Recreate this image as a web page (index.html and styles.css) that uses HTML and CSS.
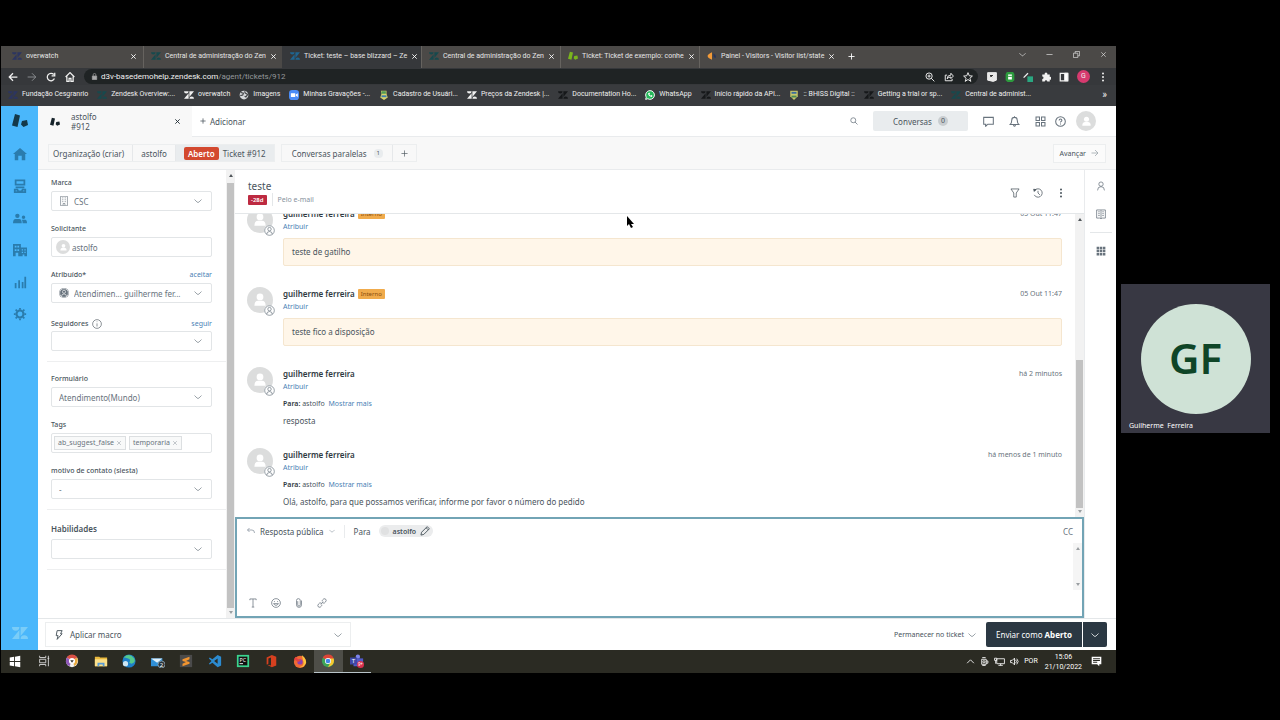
FILE: index.html
```html
<!DOCTYPE html>
<html lang="pt-BR">
<head>
    <meta charset="UTF-8">
    <meta name="viewport" content="width=device-width, initial-scale=1.0">
    <title>Ticket: teste – base blizzard – Zendesk</title>
    <link rel="stylesheet" href="styles.css">
</head>
<body>

<svg class="sprite" aria-hidden="true">
    <symbol id="i-close" viewBox="0 0 16 16"><path d="M3 3l10 10M13 3L3 13"/></symbol>
    <symbol id="i-plus" viewBox="0 0 16 16"><path d="M8 1v14M1 8h14"/></symbol>
    <symbol id="i-chevron" viewBox="0 0 16 16"><path d="M1 5l5 5q2 2 4 0l5-5"/></symbol>
    <symbol id="i-up" viewBox="0 0 16 16"><path d="M2 11l6-6 6 6"/></symbol>
    <symbol id="i-back" viewBox="0 0 16 16"><path d="M15 8H2M8 2L2 8l6 6"/></symbol>
    <symbol id="i-forward" viewBox="0 0 16 16"><path d="M1 8h13M8 2l6 6-6 6"/></symbol>
    <symbol id="i-reload" viewBox="0 0 16 16"><path d="M13.5 10.5A6 6 0 1 1 12.500 4M14 1v5H9"/></symbol>
    <symbol id="i-house" viewBox="0 0 16 16"><path d="M1 8l7-7 7 7M3 7v8h3.500v-5h3v5H13V7"/></symbol>
    <symbol id="i-lock" viewBox="0 0 16 16"><path d="M3 7h10v8H3z" fill="currentColor"/><path d="M5 7V4a3 3 0 0 1 6 0v3"/></symbol>
    <symbol id="i-search" viewBox="0 0 16 16"><circle cx="6.500" cy="6.500" r="5"/><path d="M10 10l5 5"/></symbol>
    <symbol id="i-zoom" viewBox="0 0 16 16"><circle cx="6.500" cy="6.500" r="5"/><path d="M10 10l5 5M4 6.500h5M6.500 4v5"/></symbol>
    <symbol id="i-share" viewBox="0 0 16 16"><path d="M5 5H2v9h11v-3M5 11q0-6 6-6V2l4 4.500-4 4V8q-4 0-6 3z"/></symbol>
    <symbol id="i-star" viewBox="0 0 16 16"><path d="M8 1l2 5 5 .5-4 3.500 1.500 5L8 12l-4.500 3L5 10 1 6.500 6 6z"/></symbol>
    <symbol id="i-puzzle" viewBox="0 0 16 16"><path fill="currentColor" stroke="none" d="M2 4h4a2.200 2.200 0 1 1 4 0h4v4a2.200 2.200 0 1 1 0 4v3h-4a2 2 0 0 0-4 0H2v-4a2 2 0 0 0 0-4z"/></symbol>
    <symbol id="i-dots" viewBox="0 0 16 16"><g fill="currentColor" stroke="none"><circle cx="8" cy="2.500" r="1.600"/><circle cx="8" cy="8" r="1.600"/><circle cx="8" cy="13.500" r="1.600"/></g></symbol>
    <symbol id="i-zendesk" viewBox="0 0 16 16"><path fill="currentColor" stroke="none" d="M0 2h7.400a3.700 3.700 0 0 1-7.400 0zM7.400 5v9H0zM8.600 11V2H16zM8.600 14a3.700 3.700 0 0 1 7.400 0z"/></symbol>
    <symbol id="i-product" viewBox="0 0 16 16"><path fill="currentColor" stroke="none" d="M3 1l5 1.500-2.500 11.500L0 12.500zM10 8l5-1 1 5-4.500 2-2.500-2.500z"/></symbol>
    <symbol id="i-user" viewBox="0 0 16 16"><g fill="currentColor" stroke="none"><circle cx="8" cy="5.500" r="2.700"/><path d="M3.500 12.500q0-4 3-4h3q3 0 3 4z"/></g></symbol>
    <symbol id="i-agent" viewBox="0 0 16 16"><circle cx="8" cy="8" r="7"/><circle cx="8" cy="6" r="2.500"/><path d="M4 13.500q0-4 4-4t4 4"/></symbol>
    <symbol id="i-info" viewBox="0 0 16 16"><circle cx="8" cy="8" r="7"/><path d="M8 4v1M8 7v5"/></symbol>
    <symbol id="i-building" viewBox="0 0 16 16"><path d="M2.500.5h11v15h-11zM5 3h2M9 3h2M5 6h2M9 6h2M5 9h2M9 9h2M6.500 15v-3h3v3"/></symbol>
    <symbol id="i-chat" viewBox="0 0 16 16"><path d="M1 2h14v10H7l-3 3v-3H1z"/></symbol>
    <symbol id="i-bell" viewBox="0 0 16 16"><path d="M1.500 12.500Q4 10 4 6a4 4 0 0 1 8 0q0 4 2.500 6.500zM6.500 13q1.500 3.500 3 0M8 2V.5"/></symbol>
    <symbol id="i-apps" viewBox="0 0 16 16"><path d="M1.500 1.500h5v5h-5zM9.500 1.500h5v5h-5zM1.500 9.500h5v5h-5zM9.500 9.500h5v5h-5z"/></symbol>
    <symbol id="i-help" viewBox="0 0 16 16"><circle cx="8" cy="8" r="7"/><path d="M6 6.500q0-2 2-2t2 1.700q0 1-1.200 1.700Q8 8.500 8 9.500M8 11v1.200"/></symbol>
    <symbol id="i-filter" viewBox="0 0 16 16"><path d="M1.500 1.500h13L10 8v6.500H6V8z"/></symbol>
    <symbol id="i-history" viewBox="0 0 16 16"><path d="M2 11A6.700 6.700 0 1 0 3 3.500M8 4.500V8l3 3"/><path fill="currentColor" d="M1 2l4 .5-3 3z"/></symbol>
    <symbol id="i-person" viewBox="0 0 16 16"><circle cx="8" cy="5" r="3.500"/><path d="M2.500 15q0-6 5.500-6t5.500 6"/></symbol>
    <symbol id="i-book" viewBox="0 0 16 16"><path d="M1 1.500h14v13h-5l-2 1-2-1H1zM8 2v13M3.500 4.500H6M3.500 7.500H6M3.500 10.500H6M10 4.500h2.500M10 7.500h2.500M10 10.500h2.500"/></symbol>
    <symbol id="i-grid" viewBox="0 0 16 16"><path fill="currentColor" stroke="none" d="M1 1h4v4H1zM6 1h4v4H6zM11 1h4v4h-4zM1 6h4v4H1zM6 6h4v4H6zM11 6h4v4h-4zM1 11h4v4H1zM6 11h4v4H6zM11 11h4v4h-4z"/></symbol>
    <symbol id="i-reply" viewBox="0 0 16 16"><path d="M5 2L1 6l4 4M1 6h9q5 0 5 6"/></symbol>
    <symbol id="i-pencil" viewBox="0 0 16 16"><path d="M1.500 14.500l1-4.500 9-9 3.500 3.500-9 9zM10 3l3 3"/></symbol>
    <symbol id="i-text" viewBox="0 0 16 16"><path d="M3 3.500V1.500h10v2M8 1.500v13M6 14.500h4"/></symbol>
    <symbol id="i-smile" viewBox="0 0 16 16"><circle cx="8" cy="8" r="7"/><path d="M4 9q4 5.500 8 0zM5.500 5v1.500M10.500 5v1.500"/></symbol>
    <symbol id="i-clip" viewBox="0 0 16 16"><path d="M12 4v7a4 4 0 0 1-8 0V4a3 3 0 0 1 6 0v7a2 2 0 0 1-4 0V5"/></symbol>
    <symbol id="i-link" viewBox="0 0 16 16"><path d="M7 8q-3-1-4.500 1.500-2.500 3 0 5 2.500 1.500 4.500-1.500 1-1 .5-2.500M9 8q3 1 4.500-1.500 2.500-3 0-5Q11 0 9 3 8 4 8.500 5.500M6 10l4-4"/></symbol>
    <symbol id="i-bolt" viewBox="0 0 16 16"><path d="M5 1h8l-2.500 5H13L5 15l1.500-6H3.500z"/></symbol>
</svg>

<div class="desktop">
    <div class="chrome-tabs">
        <div class="chrome-tab first"><svg class="icon favicon navy"><use href="#i-zendesk"/></svg><span>overwatch</span><button aria-label="Fechar"><svg class="icon bold"><use href="#i-close"/></svg></button></div>
        <div class="chrome-tab"><svg class="icon favicon teal"><use href="#i-zendesk"/></svg><span>Central de administração do Zen</span><button aria-label="Fechar"><svg class="icon bold"><use href="#i-close"/></svg></button></div>
        <div class="chrome-tab active"><svg class="icon favicon blue"><use href="#i-zendesk"/></svg><span>Ticket: teste – base blizzard – Ze</span><button aria-label="Fechar"><svg class="icon bold"><use href="#i-close"/></svg></button></div>
        <div class="chrome-tab"><svg class="icon favicon teal"><use href="#i-zendesk"/></svg><span>Central de administração do Zen</span><button aria-label="Fechar"><svg class="icon bold"><use href="#i-close"/></svg></button></div>
        <div class="chrome-tab"><svg class="icon favicon lime"><use href="#i-product"/></svg><span>Ticket: Ticket de exemplo: conhe</span><button aria-label="Fechar"><svg class="icon bold"><use href="#i-close"/></svg></button></div>
        <div class="chrome-tab"><svg class="icon favicon" viewBox="0 0 16 16"><path d="M8 2v12Q1 11 1 8t7-6z" fill="#f29a38" stroke="none"/><path d="M10 4q5 2 4 7l-3-1z" fill="#27345e" stroke="none"/></svg><span>Painel - Visitors - Visitor list/state</span><button aria-label="Fechar"><svg class="icon bold"><use href="#i-close"/></svg></button></div>
        <button class="new-tab" aria-label="Nova guia"><svg class="icon bold"><use href="#i-plus"/></svg></button>
        <div class="window-buttons">
            <button aria-label="Pesquisar guias"><svg class="icon"><use href="#i-chevron"/></svg></button>
            <button aria-label="Minimizar"><svg class="icon" viewBox="0 0 16 16"><path d="M1 8h14"/></svg></button>
            <button aria-label="Restaurar"><svg class="icon" viewBox="0 0 16 16"><path d="M1 5h10v10H1zM5 5V1h10v10h-4"/></svg></button>
            <button aria-label="Fechar janela"><svg class="icon"><use href="#i-close"/></svg></button>
        </div>
    </div>

    <div class="chrome-bar">
        <button aria-label="Voltar"><svg class="icon bold"><use href="#i-back"/></svg></button>
        <button aria-label="Avançar página" class="dim"><svg class="icon"><use href="#i-forward"/></svg></button>
        <button aria-label="Recarregar"><svg class="icon bold"><use href="#i-reload"/></svg></button>
        <button aria-label="Página inicial"><svg class="icon bold"><use href="#i-house"/></svg></button>
        <div class="address">
            <svg class="icon lock"><use href="#i-lock"/></svg>
            <span class="url">d3v-basedemohelp.zendesk.com<span>/agent/tickets/912</span></span>
            <svg class="icon"><use href="#i-zoom"/></svg>
            <svg class="icon"><use href="#i-share"/></svg>
            <svg class="icon"><use href="#i-star"/></svg>
        </div>
        <div class="extensions">
            <svg class="icon" viewBox="0 0 16 16"><path d="M1 1h14v12l-5 2-9-2z" fill="#e8e8e8"/><path d="M4 4h7l-2 5-5-1z" fill="#333"/><path d="M5 11l7-7"/></svg>
            <svg class="icon" viewBox="0 0 16 16"><path d="M3 0h10l2 3v10l-3 3H4l-3-3V3z" fill="#2c9a3e" stroke="none"/><path d="M5 4h6v8H5z" fill="#fff" stroke="none"/><path d="M5 7h6" stroke="#2c9a3e"/></svg>
            <svg class="icon" viewBox="0 0 16 16"><path d="M1 9L8 2" stroke-width="2"/><path d="M7 7h9v9H7z" fill="#2aa781" stroke="none"/></svg>
            <svg class="icon"><use href="#i-puzzle"/></svg>
            <svg class="icon" viewBox="0 0 16 16"><path d="M2 2h12v12H2z" stroke-width="2"/><path d="M9 2h5v12H9z" fill="#fff"/></svg>
            <span class="profile">G</span>
            <svg class="icon"><use href="#i-dots"/></svg>
        </div>
    </div>

    <nav class="bookmarks">
        <a href="#"><svg class="icon navy"><use href="#i-zendesk"/></svg>Fundação Cesgranrio</a>
        <a href="#"><svg class="icon teal"><use href="#i-zendesk"/></svg>Zendesk Overview:...</a>
        <a href="#"><svg class="icon"><use href="#i-zendesk"/></svg>overwatch</a>
        <a href="#"><svg class="icon" viewBox="0 0 16 16"><circle cx="8" cy="8" r="7" fill="#d5d7da" stroke="none"/><path d="M3 4l4 1-1 3-4 1M9 2l1 3 4 2-3 4-2-1" stroke="#46484b" stroke-width="2"/></svg>Imagens</a>
        <a href="#"><svg class="icon" viewBox="0 0 16 16"><rect x="0" y="0" width="16" height="16" rx="5" fill="#4a8cf7" stroke="none"/><path d="M3 5h7v6H3zM11 7l3-2v6l-3-2z" fill="#fff" stroke="none"/></svg>Minhas Gravações -...</a>
        <a href="#"><svg class="icon" viewBox="0 0 16 16"><path d="M3 1h9v5l2 6-6 4-6-4 2-6z" fill="#d8d36b" stroke="none"/><path d="M4 2h7v4H4z" fill="#4f9a54" stroke="none"/><path d="M4 10h8" stroke="#3c7eb0" stroke-width="3"/></svg>Cadastro de Usuári...</a>
        <a href="#"><svg class="icon"><use href="#i-zendesk"/></svg>Preços da Zendesk |...</a>
        <a href="#"><svg class="icon black"><use href="#i-zendesk"/></svg>Documentation Ho...</a>
        <a href="#"><svg class="icon" viewBox="0 0 16 16"><path d="M8 1a7 7 0 1 1-3.500 13L1 15l1-3.500A7 7 0 0 1 8 1z" fill="#25b85a" stroke="#fff"/><path d="M5 5q0 5 6 6l1-2-2-1-1 1-2-2 1-1-1-2z" fill="#fff" stroke="none"/></svg>WhatsApp</a>
        <a href="#"><svg class="icon black"><use href="#i-zendesk"/></svg>Início rápido da API...</a>
        <a href="#"><svg class="icon" viewBox="0 0 16 16"><path d="M2 1h12v9l-6 6-6-6z" fill="#c8c76a" stroke="none"/><path d="M4 3h8v3H4z" fill="#3b6e9c" stroke="none"/><path d="M4 9h8v3H4z" fill="#4a8a56" stroke="none"/></svg>:: BHISS Digital ::</a>
        <a href="#"><svg class="icon black"><use href="#i-zendesk"/></svg>Getting a trial or sp...</a>
        <a href="#"><svg class="icon teal"><use href="#i-zendesk"/></svg>Central de administ...</a>
        <button class="more" aria-label="Mais favoritos">»</button>
    </nav>

    <div class="app">
        <nav class="sidebar">
            <svg class="icon product"><use href="#i-product"/></svg>
            <a href="#" aria-label="Início"><svg class="icon" viewBox="0 0 16 16"><path class="solid" d="M8 1l8 7h-2v7h-4v-5H6v5H2V8H0z"/></svg></a>
            <a href="#" aria-label="Visualizações"><svg class="icon" viewBox="0 0 16 16"><path d="M3 1.500h10v5H3zM3 9.500h10M2 12h3l1 2h4l1-2h3v3H2z" stroke-width="2"/></svg></a>
            <a href="#" aria-label="Clientes"><svg class="icon" viewBox="0 0 16 16"><path class="solid" d="M5 3a2.500 2.500 0 1 1 0 5 2.500 2.500 0 0 1 0-5zM0 14q0-5 3-5h4q3 0 3 5zM12 5a2 2 0 1 1 0 4 2 2 0 0 1 0-4zM11 14q0-3-1-4h4q2 0 2 4z"/></svg></a>
            <a href="#" aria-label="Organizações"><svg class="icon" viewBox="0 0 16 16"><path class="solid" fill-rule="evenodd" d="M0 1h9v4h7v10H0zM2 3v2h2V3zM5 3v2h2V3zM2 7v2h2V7zM5 7v2h2V7zM3 11v4h3v-4zM10 7v1.500h1.500V7zM13 7v1.500h1.500V7zM10 10v1.500h1.500V10zM13 10v1.500h1.500V10zM11 13v2h2v-2z"/></svg></a>
            <a href="#" aria-label="Relatórios"><svg class="icon" viewBox="0 0 16 16"><path class="solid" d="M2 9h2v6H2zM6 6h2v9H6zM10 8h2v7h-2zM13 2h2v13h-2z"/></svg></a>
            <a href="#" aria-label="Administrador"><svg class="icon" viewBox="0 0 16 16"><circle cx="8" cy="8" r="4" stroke-width="2.500"/><path d="M8 1v2M8 13v2M1 8h2M13 8h2M3 3l1.500 1.500M11.500 11.500L13 13M13 3l-1.500 1.500M4.500 11.500L3 13" stroke-width="2"/></svg></a>
            <svg class="icon brand"><use href="#i-zendesk"/></svg>
        </nav>

        <div class="workspace">
            <header class="topbar">
                <div class="ticket-tab">
                    <svg class="icon"><use href="#i-product"/></svg>
                    <div class="ticket-name">astolfo<br>#912</div>
                    <button aria-label="Fechar ticket"><svg class="icon bold"><use href="#i-close"/></svg></button>
                </div>
                <button class="add"><svg class="icon bold"><use href="#i-plus"/></svg>Adicionar</button>
                <div class="top-tools">
                    <button aria-label="Pesquisar" class="search"><svg class="icon"><use href="#i-search"/></svg></button>
                    <button class="talks">Conversas <span>0</span></button>
                    <button aria-label="Chat"><svg class="icon"><use href="#i-chat"/></svg></button>
                    <button aria-label="Notificações"><svg class="icon"><use href="#i-bell"/></svg></button>
                    <button aria-label="Produtos"><svg class="icon"><use href="#i-apps"/></svg></button>
                    <button aria-label="Ajuda" class="help"><svg class="icon"><use href="#i-help"/></svg></button>
                    <button aria-label="Perfil" class="avatar small"><svg class="icon"><use href="#i-user"/></svg></button>
                </div>
            </header>

            <div class="subnav">
                <div class="crumbs">
                    <button>Organização (criar)</button>
                    <button>astolfo</button>
                    <button class="current"><span class="status">Aberto</span>Ticket #912</button>
                </div>
                <div class="crumbs">
                    <button class="side-talks">Conversas paralelas <span class="count">1</span></button>
                    <button aria-label="Nova conversa paralela" class="plus"><svg class="icon"><use href="#i-plus"/></svg></button>
                </div>
                <button class="next">Avançar <svg class="icon"><use href="#i-forward"/></svg></button>
            </div>

            <div class="content">
                <form class="fields">
                    <div class="group">
                        <div class="field">
                            <div class="label-row"><label for="brand">Marca</label></div>
                            <div class="box"><svg class="icon"><use href="#i-building"/></svg><select id="brand"><option>CSC</option></select><svg class="icon chev"><use href="#i-chevron"/></svg></div>
                        </div>
                        <div class="field">
                            <div class="label-row"><label for="requester">Solicitante</label></div>
                            <div class="box tight"><span class="avatar mini"><svg class="icon"><use href="#i-user"/></svg></span><input type="text" id="requester" value="astolfo"></div>
                        </div>
                        <div class="field">
                            <div class="label-row"><label for="assignee">Atribuído*</label><a href="#">aceitar</a></div>
                            <div class="box"><span class="agent-dot"><svg class="icon"><use href="#i-agent"/></svg></span><select id="assignee"><option>Atendimen... guilherme fer...</option></select><svg class="icon chev"><use href="#i-chevron"/></svg></div>
                        </div>
                        <div class="field">
                            <div class="label-row tall"><label for="followers">Seguidores <svg class="icon"><use href="#i-info"/></svg></label><a href="#">seguir</a></div>
                            <div class="box"><select id="followers"><option></option></select><svg class="icon chev"><use href="#i-chevron"/></svg></div>
                        </div>
                    </div>
                    <div class="group">
                        <div class="field">
                            <div class="label-row"><label for="form">Formulário</label></div>
                            <div class="box"><select id="form"><option>Atendimento(Mundo)</option></select><svg class="icon chev"><use href="#i-chevron"/></svg></div>
                        </div>
                        <div class="field">
                            <div class="label-row"><label for="tags">Tags</label></div>
                            <div class="box tags">
                                <span class="tag">ab_suggest_false <svg class="icon"><use href="#i-close"/></svg></span>
                                <span class="tag">temporaria <svg class="icon"><use href="#i-close"/></svg></span>
                                <input type="text" id="tags">
                            </div>
                        </div>
                        <div class="field">
                            <div class="label-row"><label for="reason">motivo de contato (siesta)</label></div>
                            <div class="box"><select id="reason"><option>-</option></select><svg class="icon chev"><use href="#i-chevron"/></svg></div>
                        </div>
                    </div>
                    <div class="group">
                        <div class="field">
                            <div class="label-row big"><label for="skills">Habilidades</label></div>
                            <div class="box"><select id="skills"><option></option></select><svg class="icon chev"><use href="#i-chevron"/></svg></div>
                        </div>
                    </div>
                </form>
                <div class="scrollbar fields-scroll"><i class="arrow up"></i><i class="thumb"></i><i class="arrow down"></i></div>

                <main class="conversation">
                    <div class="conv-head">
                        <div>
                            <h1>teste</h1>
                            <div class="meta"><span class="sla">-28d</span><span class="channel">Pelo e-mail</span></div>
                        </div>
                        <div class="conv-tools">
                            <button aria-label="Filtrar"><svg class="icon"><use href="#i-filter"/></svg></button>
                            <button aria-label="Eventos"><svg class="icon"><use href="#i-history"/></svg></button>
                            <button aria-label="Mais opções"><svg class="icon"><use href="#i-dots"/></svg></button>
                        </div>
                    </div>

                    <div class="log">
                        <div class="messages">
                            <article class="message">
                                <div class="avatar"><svg class="icon"><use href="#i-user"/></svg><span class="badge"><svg class="icon"><use href="#i-agent"/></svg></span></div>
                                <div class="body">
                                    <div class="by"><b>guilherme ferreira</b><span class="internal">Interno</span><time>05 Out 11:47</time></div>
                                    <a href="#" class="assign">Atribuir</a>
                                    <p class="note">teste de gatilho</p>
                                </div>
                            </article>
                            <article class="message">
                                <div class="avatar"><svg class="icon"><use href="#i-user"/></svg><span class="badge"><svg class="icon"><use href="#i-agent"/></svg></span></div>
                                <div class="body">
                                    <div class="by"><b>guilherme ferreira</b><span class="internal">Interno</span><time>05 Out 11:47</time></div>
                                    <a href="#" class="assign">Atribuir</a>
                                    <p class="note">teste fico a disposição</p>
                                </div>
                            </article>
                            <article class="message">
                                <div class="avatar"><svg class="icon"><use href="#i-user"/></svg><span class="badge"><svg class="icon"><use href="#i-agent"/></svg></span></div>
                                <div class="body">
                                    <div class="by"><b>guilherme ferreira</b><time>há 2 minutos</time></div>
                                    <a href="#" class="assign">Atribuir</a>
                                    <div class="to"><b>Para:</b> astolfo <a href="#">Mostrar mais</a></div>
                                    <p>resposta</p>
                                </div>
                            </article>
                            <article class="message">
                                <div class="avatar"><svg class="icon"><use href="#i-user"/></svg><span class="badge"><svg class="icon"><use href="#i-agent"/></svg></span></div>
                                <div class="body">
                                    <div class="by"><b>guilherme ferreira</b><time>há menos de 1 minuto</time></div>
                                    <a href="#" class="assign">Atribuir</a>
                                    <div class="to"><b>Para:</b> astolfo <a href="#">Mostrar mais</a></div>
                                    <p>Olá, astolfo, para que possamos verificar, informe por favor o número do pedido</p>
                                </div>
                            </article>
                        </div>
                        <div class="scrollbar log-scroll"><i class="arrow up"></i><i class="thumb"></i><i class="arrow down"></i></div>
                    </div>

                    <div class="composer">
                        <div class="composer-head">
                            <button class="mode"><svg class="icon"><use href="#i-reply"/></svg>Resposta pública<svg class="icon chev"><use href="#i-chevron"/></svg></button>
                            <span class="to-label">Para</span>
                            <button class="recipient"><i></i>astolfo<svg class="icon"><use href="#i-pencil"/></svg></button>
                            <button class="cc">CC</button>
                        </div>
                        <div class="editor">
                            <textarea aria-label="Resposta pública"></textarea>
                            <div class="scrollbar"><i class="arrow up"></i><i class="arrow down"></i></div>
                        </div>
                        <div class="composer-tools">
                            <button aria-label="Texto"><svg class="icon"><use href="#i-text"/></svg></button>
                            <button aria-label="Emoji"><svg class="icon"><use href="#i-smile"/></svg></button>
                            <button aria-label="Anexar"><svg class="icon"><use href="#i-clip"/></svg></button>
                            <button aria-label="Link"><svg class="icon"><use href="#i-link"/></svg></button>
                        </div>
                    </div>
                    <svg class="cursor" viewBox="0 0 8 12"><path d="M1 0v10l2-2 2 4 2-1-2-3h3z"/></svg>
                </main>

                <aside class="rail">
                    <button aria-label="Contexto do cliente"><svg class="icon"><use href="#i-person"/></svg></button>
                    <button aria-label="Conhecimento"><svg class="icon"><use href="#i-book"/></svg></button>
                    <hr>
                    <button aria-label="Aplicativos"><svg class="icon"><use href="#i-grid"/></svg></button>
                </aside>
            </div>

            <footer class="footer">
                <button class="macro"><svg class="icon"><use href="#i-bolt"/></svg><span>Aplicar macro</span><svg class="icon chev"><use href="#i-chevron"/></svg></button>
                <button class="stay">Permanecer no ticket<svg class="icon chev"><use href="#i-chevron"/></svg></button>
                <div class="submit">
                    <button>Enviar como <b>Aberto</b></button>
                    <button aria-label="Outros status"><svg class="icon"><use href="#i-chevron"/></svg></button>
                </div>
            </footer>
        </div>
    </div>

    <div class="taskbar">
        <div class="tasks">
            <button aria-label="Iniciar"><svg viewBox="0 0 16 16"><path fill="#fff" d="M2 4l5-1v5H2zM8 3l6-1v6H8zM2 9h5v5l-5-1zM8 9h6v6l-6-1z"/></svg></button>
            <button aria-label="Visão de tarefas"><svg viewBox="0 0 16 16"><path fill="none" stroke="#ddd" d="M3 6h7v4H3zM3 2v2h7V2M3 14v-2h7v2M13 2v12M12 5h2"/></svg></button>
            <button aria-label="Chrome"><svg viewBox="0 0 16 16"><circle cx="8" cy="8" r="7" fill="#f0f0f0"/><path fill="#d95045" d="M8 8L2 4a7 7 0 0 1 12 0z"/><path fill="#e8a93e" d="M8 8l6-4q2 6-3 10z"/><path fill="#8f58b8" d="M8 8L2 4q-3 7 3 10z"/><circle cx="8" cy="8" r="3.500" fill="#fff"/><path fill="#333" d="M6 7h4l-2 3z"/></svg></button>
            <button aria-label="Explorador"><svg viewBox="0 0 16 16"><path fill="#e9b93d" d="M1 3h5l1 1h8v10H1z"/><path fill="#fbe08a" d="M1 6h14v8H1z"/><path fill="#5a9bd5" d="M4 10h8v4h-2v-2H6v2H4z"/></svg></button>
            <button aria-label="Edge"><svg viewBox="0 0 16 16"><circle cx="8" cy="8" r="7.500" fill="#1e7fc8"/><path fill="#55c98c" d="M2 4q6-6 12 1 2 5-3 6l-3-1q3-4-1-5-3-1-5-1z"/><circle cx="4" cy="11" r="3" fill="#cde6f3"/></svg></button>
            <button aria-label="E-mail"><svg viewBox="0 0 16 16"><path fill="#2f8fd6" d="M0 5h13v9H0z"/><path fill="#dff0fb" d="M0 5h13l-6 5z"/><circle cx="12" cy="12" r="4" fill="#27323a" stroke="#8ea4b0"/><text x="10" y="15" font-size="7" fill="#fff">2</text></svg></button>
            <button aria-label="Sublime Text"><svg viewBox="0 0 16 16"><path fill="#4b4b4b" d="M1 1h14v14H1z"/><path fill="#f0942f" d="M4 6l8-3v3L8 8l4 1v2l-8 3v-3l4-2-4-1z"/></svg></button>
            <button aria-label="VS Code"><svg viewBox="0 0 16 16"><path fill="#2c8bd0" fill-rule="evenodd" d="M11 1l4 2v10l-4 2-6-5-3 2-1-1 3-3-3-3 1-1 3 2zM11 5L7 8l4 3z"/></svg></button>
            <button aria-label="PyCharm"><svg viewBox="0 0 16 16"><path fill="#3bd58f" d="M1 1h14v14H1z"/><path fill="#111" d="M3 3h10v10H3z"/><text x="4" y="9" font-size="6" fill="#fff">PC</text><path stroke="#fff" d="M4 11h4"/></svg></button>
            <button aria-label="Office"><svg viewBox="0 0 16 16"><path fill="#d6401f" d="M9 1l5 2v10l-5 2-6-3 5 1V4L5 5v6l-2 1V4z"/></svg></button>
            <button aria-label="Firefox"><svg viewBox="0 0 16 16"><circle cx="8" cy="9" r="7" fill="#f06a35"/><path fill="#fbc53d" d="M10 1q5 4 5 9-3 6-8 5 6-1 5-6z"/><circle cx="8" cy="9" r="3" fill="#8a3fb0"/><path fill="#e9413f" d="M1 6l2-3 3 3 3 1-3 2z"/></svg></button>
            <button aria-label="Google Chrome" class="open focused"><svg viewBox="0 0 16 16"><circle cx="8" cy="8" r="7" fill="#3da457"/><path fill="#dc4437" d="M8 8L2 4a7 7 0 0 1 12.500 1z"/><path fill="#f6c62f" d="M8 5h6.500q2 8-6.500 10l3-6z"/><circle cx="8" cy="8" r="3.500" fill="#fff"/><circle cx="8" cy="8" r="2.700" fill="#4285e8"/></svg></button>
            <button aria-label="Teams" class="open"><svg viewBox="0 0 16 16"><circle cx="9" cy="3" r="2.500" fill="#7b83eb"/><path fill="#5059c9" d="M4 5h11v9H4z"/><path fill="#3f48a8" d="M0 4h8v8H0z"/><text x="2" y="10" font-size="7" fill="#fff">T</text><circle cx="12" cy="12" r="4" fill="#d8304f"/><text x="9" y="14" font-size="5" fill="#fff">9+</text></svg></button>
        </div>
        <div class="tray">
            <svg class="icon"><use href="#i-up"/></svg>
            <svg class="icon" viewBox="0 0 16 16"><path d="M3 4h8v9H3zM4 1h6M4 15h6M11 7h3v4h-3"/><circle cx="7" cy="8.500" r="2"/></svg>
            <svg class="icon wide" viewBox="0 0 20 16"><path d="M5 3h14v9H5zM12 12v3M8 15h8M1 2h4v4H1zM3 6v6"/></svg>
            <svg class="icon" viewBox="0 0 16 16"><path d="M1 6h3l4-4v12l-4-4H1zM10 5q3 3 0 6M12 3q5 5 0 10"/></svg>
            <span>POR</span>
            <span class="clock">15:06<br>21/10/2022</span>
            <svg class="icon notes" viewBox="0 0 16 16"><path d="M1 1h14v11h-3v3l-3-3H1z" fill="#fff" stroke="none"/><path d="M3 4h10M3 6.500h10M3 9h6" stroke="#2b2b24"/></svg>
        </div>
    </div>
</div>

<div class="call">
    <div class="tile">
        <div class="initials">GF</div>
        <div class="caller">Guilherme&nbsp; Ferreira</div>
    </div>
</div>

</body>
</html>
```

FILE: styles.css
```css
* {
    box-sizing: border-box;
    margin: 0;
    padding: 0;
}
body {
    display: flex;
    height: 100vh;
    padding: 46px 10px 47px 1px;
    background: #000;
    font-family: "Noto Sans", "Open Sans", sans-serif;
    font-size: 8px;
    line-height: 13px;
    color: #49545c;
}
button, input, select, textarea {
    font: inherit;
    color: inherit;
    background: none;
    border: none;
    outline: none;
}
button {
    display: flex;
    align-items: center;
    white-space: nowrap;
    cursor: pointer;
}
a {
    color: #4a7fb5;
    text-decoration: none;
}
.sprite {
    position: absolute;
    width: 0;
    height: 0;
}
.icon {
    width: 10px;
    height: 10px;
    flex: none;
    display: block;
    fill: none;
    stroke: currentColor;
    stroke-width: 1.5;
}
.icon.bold {
    stroke-width: 2;
}
.chev {
    width: 8px;
    height: 8px;
    color: #7b868d;
}
.navy { color: #2c3560; }
.teal { color: #17494d; }
.blue { color: #1f6591; }
.lime { color: #7ab51d; }
.black { color: #16181a; }

.desktop {
    flex: 1;
    min-width: 0;
    display: flex;
    flex-direction: column;
    background: #fff;
}

/* browser */
.chrome-tabs, .chrome-bar, .bookmarks {
    font-family: Roboto, "Open Sans", sans-serif;
}
.chrome-tabs {
    display: flex;
    height: 22px;
    background: #4b4947;
    color: #e6e6e6;
    font-size: 7px;
}
.chrome-tab {
    display: flex;
    align-items: center;
    gap: 4px;
    width: 139px;
    padding: 0 6px 2px 7px;
    border-left: 1px solid #66635f;
}
.chrome-tab.first {
    width: 142px;
    padding-left: 11px;
    border-left: none;
}
.chrome-tab.active {
    background: #36383b;
    border-color: #36383b;
}
.chrome-tab span {
    flex: 1;
    white-space: nowrap;
}
.chrome-tab button .icon {
    width: 7px;
    height: 7px;
}
.chrome-tab button, .new-tab {
    color: #fff;
}
.new-tab {
    padding: 0 10px 2px;
}
.new-tab .icon {
    width: 7px;
    height: 7px;
}
.window-buttons {
    display: flex;
    gap: 20px;
    margin-left: auto;
    padding: 0 9px 5px 0;
}
.window-buttons .icon {
    width: 7px;
    height: 7px;
}
.chrome-bar {
    display: flex;
    align-items: center;
    gap: 9px;
    height: 17px;
    padding: 0 8px 0 7px;
    background: #36383b;
    color: #f1f1f1;
}
.chrome-bar .dim {
    color: #8c8f92;
}
.address {
    flex: 1;
    display: flex;
    align-items: center;
    gap: 9px;
    height: 15px;
    padding: 0 5px 0 7px;
    border-radius: 8px;
    background: #1f2324;
}
.address .lock {
    width: 7px;
    height: 7px;
    color: #aaa;
}
.address .url {
    flex: 1;
    margin-left: -6px;
}
.url span {
    color: #94989b;
}
.extensions {
    display: flex;
    align-items: center;
    gap: 8px;
}
.profile {
    width: 13px;
    border-radius: 50%;
    background: #d63a6f;
    font-size: 7px;
    text-align: center;
}
.bookmarks {
    display: flex;
    align-items: center;
    justify-content: space-between;
    height: 21px;
    padding: 0 9px 2px 7px;
    background: #393b3e;
    font-size: 7px;
    color: #f0f0f0;
}
.bookmarks a {
    display: flex;
    align-items: center;
    gap: 4px;
    color: #f0f0f0;
    white-space: nowrap;
}
.bookmarks .more {
    margin-left: 62px;
    font-size: 10px;
}

/* agent workspace */
.app {
    flex: 1;
    min-height: 0;
    display: flex;
}
.sidebar {
    display: flex;
    flex-direction: column;
    align-items: center;
    gap: 18px;
    width: 37px;
    padding: 7px 0 9px;
    background: #4ab7fb;
}
.sidebar .icon {
    width: 14px;
    height: 14px;
    color: #2a7cad;
}
.sidebar .solid {
    fill: currentColor;
    stroke: none;
}
.sidebar .product {
    width: 16px;
    height: 16px;
    color: #14394a;
}
.sidebar .brand {
    width: 16px;
    height: 16px;
    margin-top: auto;
    color: #7acdf8;
}
.workspace {
    flex: 1;
    min-width: 0;
    display: flex;
    flex-direction: column;
}
.topbar {
    display: flex;
    height: 31px;
    border-bottom: 1px solid #e9ebed;
}
.ticket-tab {
    display: flex;
    align-items: center;
    gap: 11px;
    width: 154px;
    height: 31px;
    padding: 0 11px 0 12px;
    background: #f8f8f8;
}
.ticket-tab .icon {
    color: #17242b;
}
.ticket-name {
    flex: 1;
    line-height: 10px;
}
.ticket-tab button .icon {
    width: 7px;
    height: 7px;
}
.add {
    gap: 4px;
    margin-left: 8px;
}
.add .icon {
    width: 6px;
    height: 6px;
}
.top-tools {
    display: flex;
    align-items: center;
    gap: 15px;
    margin-left: auto;
    padding-right: 20px;
    color: #68737d;
}
.top-tools .icon {
    width: 11px;
    height: 11px;
}
.top-tools .search .icon {
    width: 8px;
    height: 8px;
}
.talks {
    justify-content: center;
    gap: 6px;
    width: 95px;
    height: 20px;
    border-radius: 2px;
    background: #e9ecee;
    color: #49545c;
}
.talks span {
    width: 10px;
    line-height: 10px;
    border-radius: 5px;
    background: #c9cdd0;
    font-size: 7px;
    text-align: center;
}
.top-tools .help {
    margin: 0 -5px 0 -6px;
}
.avatar {
    position: relative;
    display: flex;
    align-items: center;
    justify-content: center;
    flex: none;
    width: 26px;
    height: 26px;
    border-radius: 50%;
    background: #dcdddd;
    color: #fff;
}
.avatar .icon {
    width: 20px;
    height: 20px;
}
.avatar.small {
    width: 20px;
    height: 20px;
}
.avatar.small .icon {
    width: 15px;
    height: 15px;
}
.avatar.mini {
    width: 14px;
    height: 14px;
}
.avatar.mini .icon {
    width: 11px;
    height: 11px;
}
.subnav {
    display: flex;
    align-items: center;
    gap: 6px;
    height: 33px;
    padding: 0 10px;
    background: #f8f8f8;
    border-bottom: 1px solid #e9ebed;
}
.crumbs {
    display: flex;
    height: 18px;
    border: 1px solid #eceeef;
}
.crumbs button {
    padding: 0 8px;
    border-right: 1px solid #e6e8ea;
}
.crumbs button:first-child {
    padding-left: 4px;
}
.crumbs button:last-child {
    border-right: none;
}
.crumbs .current {
    gap: 4px;
    background: #e9ecee;
}
.crumbs .side-talks {
    gap: 7px;
    padding: 0 9px;
}
.crumbs .side-talks:first-child {
    padding-left: 10px;
}
.status {
    padding: 0 4px;
    border-radius: 2px;
    background: #d3492f;
    color: #fff;
    font-weight: 600;
    line-height: 13px;
}
.count {
    padding: 0 3px;
    background: #e9ecee;
    border-radius: 4px;
    font-size: 6px;
    line-height: 9px;
}
.crumbs .icon {
    width: 7px;
    height: 7px;
}
.next {
    gap: 5px;
    height: 19px;
    margin-left: auto;
    padding: 0 6px;
    border: 1px solid #eceeef;
    background: #fbfbfb;
    font-size: 7px;
}
.next .icon {
    width: 8px;
    height: 8px;
    color: #9aa3a9;
}
.content {
    flex: 1;
    min-height: 0;
    display: flex;
}
.fields {
    width: 188px;
    padding: 7px 0 0 9px;
    background: #fff;
}
.group {
    display: flex;
    flex-direction: column;
    gap: 12px;
    padding: 0 14px 10px 4px;
    margin-bottom: 11px;
    border-bottom: 1px solid #eeeff0;
}
.label-row {
    display: flex;
    justify-content: space-between;
    margin-bottom: 2px;
    font-size: 7px;
    line-height: 12px;
    font-weight: 500;
}
.label-row.tall {
    margin: 2px 0 0;
    line-height: 14px;
}
.label-row.big {
    font-size: 8px;
    font-weight: 600;
    line-height: 16px;
}
.label-row label {
    display: flex;
    align-items: center;
    gap: 4px;
}
.label-row a {
    font-weight: 400;
}
.label-row .icon {
    stroke-width: 1;
}
.box {
    display: flex;
    align-items: center;
    gap: 5px;
    height: 20px;
    padding: 0 9px 0 7px;
    border: 1px solid #e2e5e7;
    border-radius: 2px;
    color: #68737d;
}
.box .icon {
    stroke-width: 1;
}
.box .chev {
    stroke-width: 1.5;
}
.box.tight {
    gap: 2px;
    padding-left: 4px;
}
.box select, .box input {
    flex: 1;
    min-width: 0;
    width: 0;
    height: 13px;
    appearance: none;
}
.agent-dot {
    border-radius: 50%;
    background: #68737d;
    color: #fff;
}
.box.tags {
    gap: 3px;
    padding: 0 2px;
}
.tag {
    display: flex;
    align-items: center;
    gap: 2px;
    padding: 0 3px;
    border: 1px solid #dcdfe1;
    background: #f8f9f9;
    font-size: 7px;
    line-height: 12px;
}
.tag .icon {
    width: 6px;
    height: 6px;
}
.scrollbar {
    display: flex;
    flex-direction: column;
    justify-content: space-between;
    align-items: center;
    width: 9px;
    padding: 4px 0;
    background: #f2f2f2;
}
.thumb {
    width: 7px;
    background: #c2c2c2;
}
.arrow {
    border: 2px solid transparent;
}
.arrow.up {
    border-top: none;
    border-bottom: 3px solid #50565a;
}
.arrow.down {
    border-bottom: none;
    border-top: 3px solid #9a9fa2;
}
.fields-scroll .thumb {
    flex: 1;
    margin: 6px 0 3px;
}
.conversation {
    position: relative;
    flex: 1;
    min-width: 0;
    display: flex;
    flex-direction: column;
    border-right: 1px solid #e9ebed;
}
.conv-head {
    display: flex;
    align-items: center;
    justify-content: space-between;
    height: 44px;
    padding: 2px 18px 0 13px;
    border-bottom: 1px solid #e4e7e9;
}
.conv-head h1 {
    font-size: 10px;
    font-weight: 400;
    line-height: 14px;
}
.meta {
    display: flex;
    align-items: center;
    color: #87929d;
}
.sla {
    padding: 0 3px;
    border-radius: 1px;
    background: #bd2a41;
    color: #fff;
    font-size: 6px;
    font-weight: 600;
    line-height: 10px;
}
.channel {
    margin-left: 5px;
    padding-left: 5px;
    border-left: 1px solid #e4e7e9;
    font-size: 7px;
}
.conv-tools {
    display: flex;
    gap: 13px;
}
.log {
    flex: 1;
    min-height: 0;
    display: flex;
}
.messages {
    flex: 1;
    display: flex;
    flex-direction: column;
    justify-content: flex-end;
    gap: 20px;
    padding: 0 13px 8px 12px;
    overflow: hidden;
}
.message {
    display: flex;
    flex: none;
    gap: 10px;
}
.badge {
    position: absolute;
    right: -2px;
    bottom: -3px;
    border-radius: 50%;
    background: #fff;
    color: #68737d;
}
.badge .icon {
    width: 11px;
    height: 11px;
    stroke-width: 1;
}
.body {
    flex: 1;
}
.by {
    display: flex;
    align-items: center;
    gap: 3px;
}
.by b, .to b {
    font-weight: 600;
    color: #2f3941;
}
.by time {
    margin-left: auto;
    font-size: 7px;
    color: #68737d;
}
.internal {
    padding: 0 3px;
    border-radius: 1px;
    background: #f0ab4c;
    color: #8a4d0c;
    font-size: 6px;
    line-height: 10px;
}
.assign, .to {
    display: block;
    font-size: 7px;
}
.to {
    margin: 4px 0;
}
.to a {
    margin-left: 2px;
}
.body p {
    line-height: 14px;
}
.body .note {
    margin: 5px 0 1px;
    padding: 6px 8px;
    border: 1px solid #f5e6cf;
    border-radius: 2px;
    background: #fff6e9;
}
.log-scroll .thumb {
    flex: 0 0 148px;
    margin: auto 0 2px;
}
.composer {
    display: flex;
    flex-direction: column;
    height: 101px;
    border: 2px solid #72a4b5;
    background: #fff;
}
.composer-head {
    display: flex;
    align-items: center;
    height: 24px;
    padding: 0 9px 0 10px;
}
.mode {
    gap: 5px;
    padding-right: 9px;
    border-right: 1px solid #e9ebed;
}
.mode .icon {
    width: 8px;
    height: 8px;
    color: #87929d;
}
.mode .chev {
    width: 6px;
    height: 6px;
}
.to-label {
    margin: 0 8px 0 9px;
}
.recipient {
    gap: 4px;
    height: 12px;
    padding: 0 3px 0 2px;
    border-radius: 6px;
    background: #ebeced;
    font-size: 7px;
    font-weight: 600;
}
.recipient i {
    width: 8px;
    height: 8px;
    border-radius: 50%;
    background: #e0e1e2;
}
.cc {
    margin-left: auto;
    color: #68737d;
}
.editor {
    flex: 1;
    min-height: 0;
    display: flex;
}
.editor textarea {
    flex: 1;
    resize: none;
    padding: 2px 11px;
}
.editor .scrollbar {
    background: #f5f5f5;
}
.editor .arrow.up {
    border-bottom-color: #9a9fa2;
}
.composer-tools {
    display: flex;
    gap: 13px;
    height: 26px;
    padding: 0 11px;
    color: #68737d;
}
.composer-tools .icon, .conv-tools .icon {
    stroke-width: 1.2;
}
.cursor {
    position: absolute;
    left: 46%;
    top: 46px;
    width: 8px;
    height: 12px;
    fill: #000;
    z-index: 2;
}
.rail {
    display: flex;
    flex-direction: column;
    align-items: center;
    width: 31px;
    padding-top: 11px;
    color: #68737d;
}
.rail button {
    margin-bottom: 18px;
}
.rail .icon {
    stroke-width: 1.2;
}
.rail hr {
    width: 22px;
    margin: -5px 0 13px;
    border: none;
    border-top: 1px solid #e4e7e9;
}
.footer {
    display: flex;
    align-items: center;
    height: 32px;
    padding: 0 9px 0 7px;
    border-top: 1px solid #e4e7e9;
}
.macro {
    gap: 6px;
    width: 306px;
    height: 25px;
    padding: 0 8px;
    border: 1px solid #eceeef;
}
.macro span {
    flex: 1;
    text-align: left;
}
.stay {
    gap: 4px;
    margin-left: auto;
    font-size: 7px;
}
.submit {
    display: flex;
    gap: 1px;
    margin-left: 10px;
}
.submit button {
    height: 25px;
    padding: 0 10px;
    border-radius: 2px 0 0 2px;
    background: #2b3843;
    color: #fff;
    white-space: pre;
}
.submit button + button {
    padding: 0 8px;
    border-radius: 0 2px 2px 0;
}
.submit .icon {
    width: 8px;
    height: 8px;
}

/* windows taskbar */
.taskbar {
    display: flex;
    justify-content: space-between;
    height: 23px;
    background: #2b2b23;
    color: #fff;
    font-size: 7px;
}
.tasks {
    display: flex;
    width: 370px;
}
.tasks button {
    flex: 1;
    justify-content: center;
    border-bottom: 1px solid transparent;
}
.tasks svg {
    width: 14px;
    height: 14px;
}
.tasks .open {
    border-bottom-color: #b9c4c9;
}
.tasks .focused {
    background: #4e4e48;
}
.tray {
    display: flex;
    align-items: center;
    gap: 5px;
    padding-right: 14px;
    font-family: Roboto, "Open Sans", sans-serif;
}
.tray .icon {
    width: 9px;
    height: 9px;
}
.tray .wide {
    width: 11px;
}
.clock {
    margin: 0 4px 0 2px;
    line-height: 10px;
    text-align: center;
}
.tray .notes {
    width: 11px;
    height: 11px;
}

/* call participant */
.call {
    display: flex;
    align-items: center;
    padding: 0 0 2px 5px;
}
.tile {
    display: flex;
    flex-direction: column;
    align-items: center;
    justify-content: space-between;
    width: 149px;
    height: 149px;
    padding: 20px 8px 1px;
    background: #383843;
}
.initials {
    width: 110px;
    border-radius: 50%;
    background: #cfe2d6;
    color: #0f4527;
    font-size: 42px;
    font-weight: 600;
    line-height: 108px;
    text-align: center;
    height: 110px;
}
.caller {
    align-self: flex-start;
    color: #fff;
    font-size: 7px;
}
```
